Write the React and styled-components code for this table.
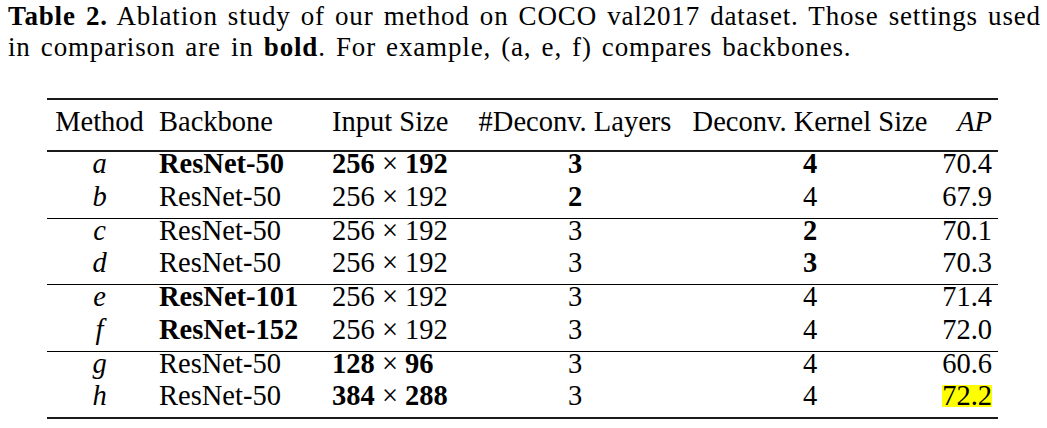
import React from 'react';
import styled, { createGlobalStyle, css } from 'styled-components';

const GlobalStyle = createGlobalStyle`
  html, body {
    margin: 0;
    padding: 0;
    background: #fff;
  }
  body {
    font-family: 'Liberation Serif', 'Times New Roman', serif;
    color: #000;
  }
`;

const Page = styled.div`
  width: 1047px;
  height: 428px;
  overflow: hidden;
`;

const Caption = styled.div`
  padding: 1px 10px 0 8px;
  font-size: 27px;
  line-height: 31px;
  letter-spacing: 0.85px;
  word-spacing: 2.5px;
`;

const CaptionLine = styled.div`
  white-space: nowrap;
  ${(p) =>
    p.$justify &&
    css`
      text-align: justify;
      text-align-last: justify;
    `}
`;

const Table = styled.div`
  margin: 35px 0 0 47px;
  width: 951px;
  font-size: 28.5px;
`;

const Rule = styled.div`
  height: ${(p) => (p.$heavy ? '2px' : '1px')};
  background: ${(p) => (p.$heavy ? '#1a1a1a' : '#000')};
`;

const cols = '105px 173px 141px 218px 252px 62px';

const Row = styled.div`
  display: grid;
  grid-template-columns: ${cols};
  height: 32.75px;
  line-height: 24px;
  white-space: nowrap;
`;

const HeaderRow = styled(Row)`
  height: 50px;
  padding-top: 10px;
  box-sizing: border-box;
`;

const Cell = styled.div`
  text-align: ${(p) => p.$align || 'left'};
  padding: ${(p) =>
    p.$align === 'right' ? '0 6px 0 0' : p.$align === 'center' ? '0' : '0 0 0 7px'};
`;

const B = styled.span`
  font-weight: bold;
`;

const I = styled.span`
  font-style: italic;
`;

const Mark = styled.span`
  display: inline-block;
  line-height: 22px;
  background: #ffff00;
`;

const rows = [
  [
    { m: 'a', bb: 'ResNet-50', bbB: 1, size: ['256', '192'], sizeB: 1, layers: '3', layersB: 1, kernel: '4', kernelB: 1, ap: '70.4' },
    { m: 'b', bb: 'ResNet-50', size: ['256', '192'], layers: '2', layersB: 1, kernel: '4', ap: '67.9' },
  ],
  [
    { m: 'c', bb: 'ResNet-50', size: ['256', '192'], layers: '3', kernel: '2', kernelB: 1, ap: '70.1' },
    { m: 'd', bb: 'ResNet-50', size: ['256', '192'], layers: '3', kernel: '3', kernelB: 1, ap: '70.3' },
  ],
  [
    { m: 'e', bb: 'ResNet-101', bbB: 1, size: ['256', '192'], layers: '3', kernel: '4', ap: '71.4' },
    { m: 'f', bb: 'ResNet-152', bbB: 1, size: ['256', '192'], layers: '3', kernel: '4', ap: '72.0' },
  ],
  [
    { m: 'g', bb: 'ResNet-50', size: ['128', '96'], sizeB: 1, layers: '3', kernel: '4', ap: '60.6' },
    { m: 'h', bb: 'ResNet-50', size: ['384', '288'], sizeB: 1, layers: '3', kernel: '4', ap: '72.2', mark: 1 },
  ],
];

const Maybe = ({ bold, children }) => (bold ? <B>{children}</B> : <>{children}</>);

const DataRow = ({ r }) => (
  <Row>
    <Cell $align="center">
      <I>{r.m}</I>
    </Cell>
    <Cell>
      <Maybe bold={r.bbB}>{r.bb}</Maybe>
    </Cell>
    <Cell>
      <Maybe bold={r.sizeB}>{r.size[0]}</Maybe> × <Maybe bold={r.sizeB}>{r.size[1]}</Maybe>
    </Cell>
    <Cell $align="center">
      <Maybe bold={r.layersB}>{r.layers}</Maybe>
    </Cell>
    <Cell $align="center">
      <Maybe bold={r.kernelB}>{r.kernel}</Maybe>
    </Cell>
    <Cell $align="right">{r.mark ? <Mark>{r.ap}</Mark> : r.ap}</Cell>
  </Row>
);

export default function App() {
  return (
    <Page>
      <GlobalStyle />
      <Caption>
        <CaptionLine $justify>
          <B>Table 2.</B> Ablation study of our method on COCO val2017 dataset. Those settings used
        </CaptionLine>
        <CaptionLine>
          in comparison are in <B>bold</B>. For example, (a, e, f) compares backbones.
        </CaptionLine>
      </Caption>
      <Table>
        <Rule $heavy />
        <HeaderRow>
          <Cell $align="center">Method</Cell>
          <Cell>Backbone</Cell>
          <Cell>Input Size</Cell>
          <Cell $align="center">#Deconv. Layers</Cell>
          <Cell $align="center">Deconv. Kernel Size</Cell>
          <Cell $align="right">
            <I>AP</I>
          </Cell>
        </HeaderRow>
        {rows.map((group, gi) => (
          <React.Fragment key={gi}>
            <Rule $heavy={gi === 0} />
            {group.map((r) => (
              <DataRow key={r.m} r={r} />
            ))}
          </React.Fragment>
        ))}
        <Rule $heavy />
      </Table>
    </Page>
  );
}
